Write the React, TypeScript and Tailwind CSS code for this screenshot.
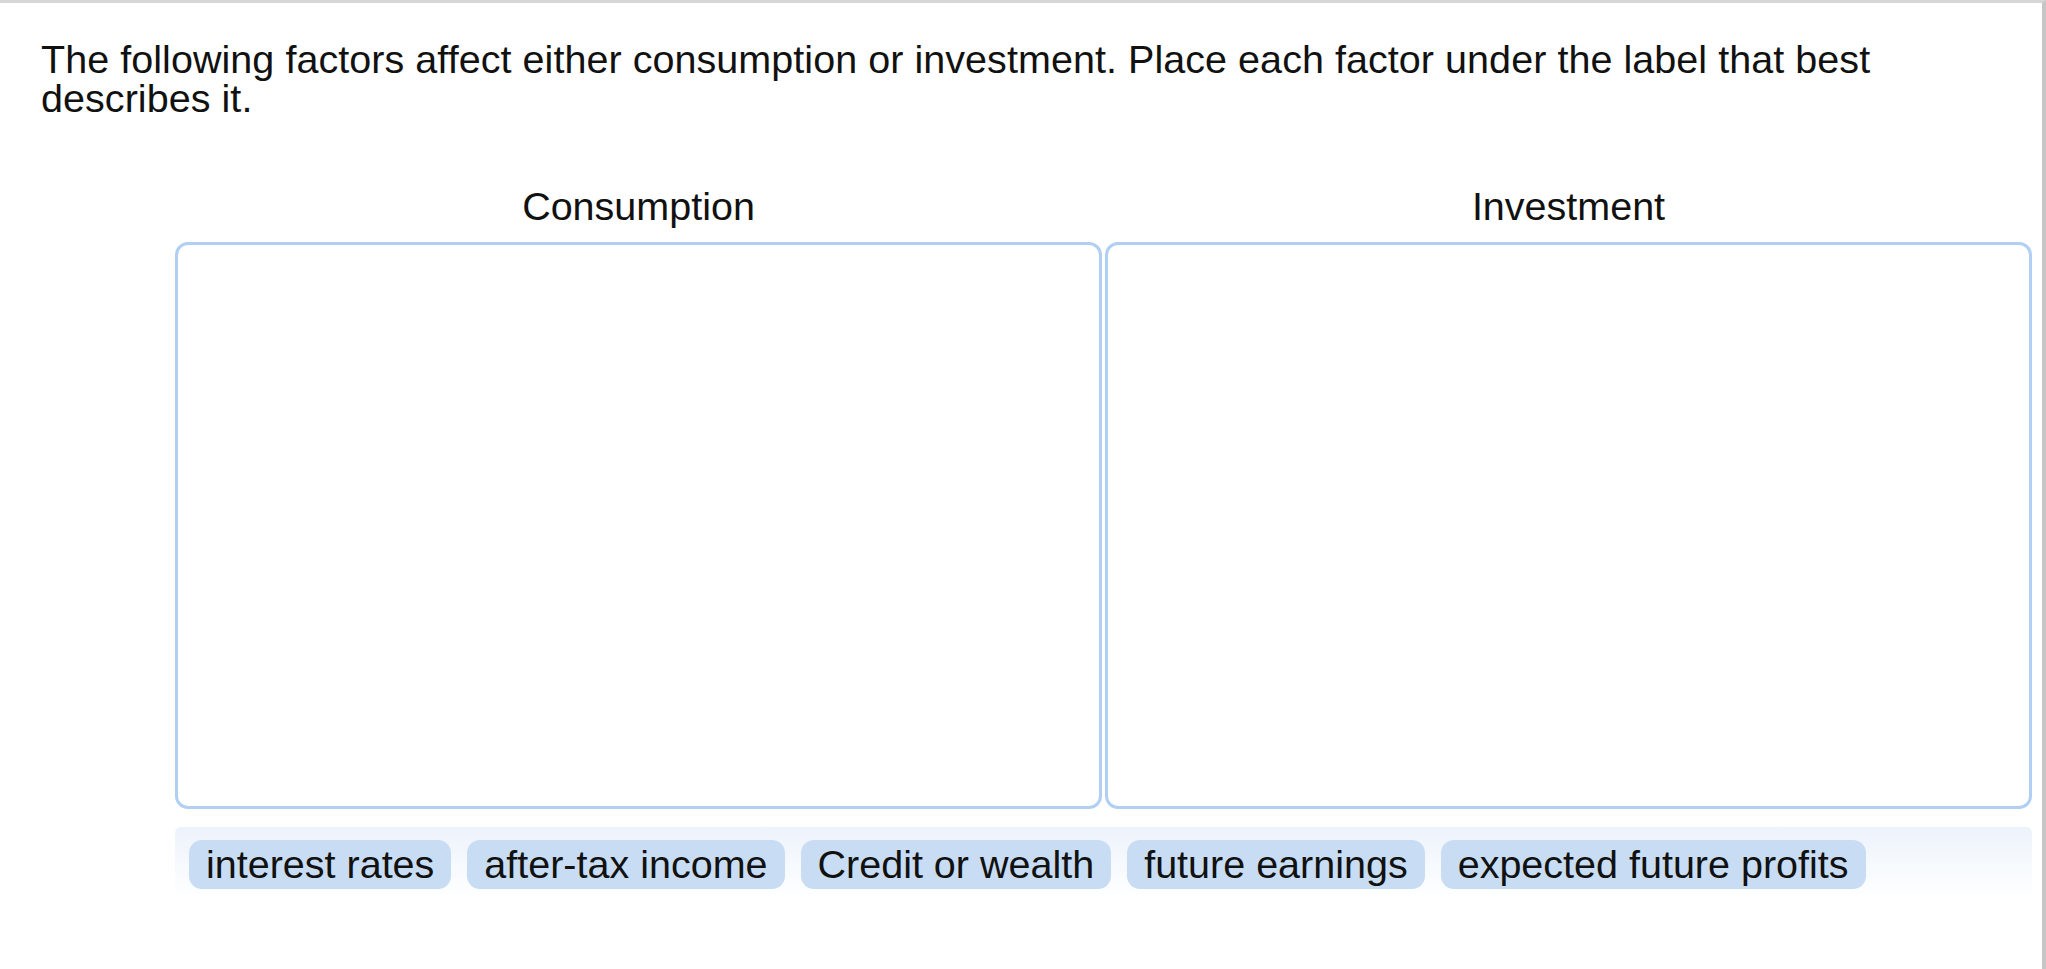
import React from "react";

const chips = [
  "interest rates",
  "after-tax income",
  "Credit or wealth",
  "future earnings",
  "expected future profits",
];

export default function App() {
  return (
    <div
      className="h-[969px] w-full bg-white border-t-[3px] border-r-[4px] border-t-[#d6d6d6] border-r-[#c6c6c6] text-[#111] overflow-hidden"
      style={{ fontFamily: '"Liberation Sans", Arial, Helvetica, sans-serif' }}
    >
      <p className="pl-[41px] w-[1950px] pt-[37px] text-[39.5px] leading-[39px] tracking-[0.05px]">
        The following factors affect either consumption or investment. Place each factor under the label that best
        describes it.
      </p>

      <div className="pl-[175px] pr-[10px] mt-[69px]">
        <div className="flex gap-[3px]">
          <div className="flex-1 flex flex-col">
            <div className="text-center text-[39.5px] leading-[39px]">Consumption</div>
            <div className="mt-[16px] h-[567px] rounded-[13px] border-[3px] border-[#b0cff2] bg-white" />
          </div>
          <div className="flex-1 flex flex-col">
            <div className="text-center text-[39.5px] leading-[39px]">Investment</div>
            <div className="mt-[16px] h-[567px] rounded-[13px] border-[3px] border-[#b0cff2] bg-white" />
          </div>
        </div>

        <div className="mt-[18px] h-[67px] rounded-[6px] bg-gradient-to-b from-[#edf3fb] to-[#fdfeff] pl-[14px] pt-[13px] flex gap-[16px] items-start">
          {chips.map((c) => (
            <div
              key={c}
              className="h-[49px] flex items-center px-[17px] rounded-[13px] bg-[#c8ddf3] text-[39.5px] leading-[39px] whitespace-nowrap"
            >
              {c}
            </div>
          ))}
        </div>
      </div>
    </div>
  );
}
